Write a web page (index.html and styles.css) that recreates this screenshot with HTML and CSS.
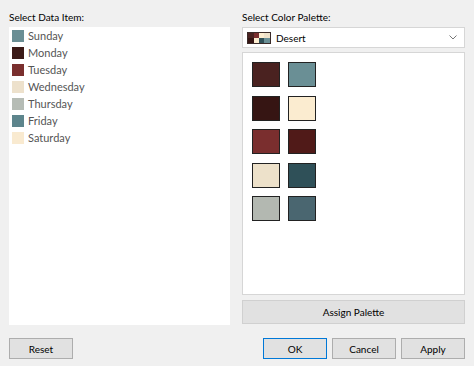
FILE: index.html
```html
<!DOCTYPE html>
<html lang="en">
<head>
    <meta charset="UTF-8">
    <title>Palette</title>
    <link rel="stylesheet" href="styles.css">
</head>
<body>

<div class="dialog">
    <div class="columns">
        <div class="col">
            <div class="label">Select Data Item:</div>
            <ul class="items">
                <li><span class="chip" style="background:#6a8e94"></span>Sunday</li>
                <li><span class="chip" style="background:#3b1a17"></span>Monday</li>
                <li><span class="chip" style="background:#7a2f2e"></span>Tuesday</li>
                <li><span class="chip" style="background:#ede1cc"></span>Wednesday</li>
                <li><span class="chip" style="background:#b6bcb5"></span>Thursday</li>
                <li><span class="chip" style="background:#5d858c"></span>Friday</li>
                <li><span class="chip" style="background:#f9ead0"></span>Saturday</li>
            </ul>
        </div>
        <div class="col">
            <div class="label">Select Color Palette:</div>
            <div class="select">
                <span class="mini">
                    <i style="background:#4a2220"></i><i style="background:#7a2e2e"></i><i style="background:#fbecd0"></i><i style="background:#ede1ca"></i>
                    <i style="background:#361513"></i><i style="background:#fbecd0"></i><i style="background:#2f5058"></i><i style="background:#6a8f95"></i>
                </span>
                <span class="select-text">Desert</span>
                <svg class="chevron" width="8" height="5" viewBox="0 0 8 5"><path d="M0.5 0.5 L4 4 L7.5 0.5" fill="none" stroke="#777" stroke-width="1"/></svg>
            </div>
            <div class="palette">
                <div class="swatches">
                    <span class="swatch" style="background:#4a2220"></span>
                    <span class="swatch" style="background:#6a8f95"></span>
                    <span class="swatch" style="background:#361513"></span>
                    <span class="swatch" style="background:#fbecd0"></span>
                    <span class="swatch" style="background:#7a2e2e"></span>
                    <span class="swatch" style="background:#501a18"></span>
                    <span class="swatch" style="background:#ede1ca"></span>
                    <span class="swatch" style="background:#2f5058"></span>
                    <span class="swatch" style="background:#b3b8b1"></span>
                    <span class="swatch" style="background:#4a6670"></span>
                </div>
            </div>
            <button class="btn wide">Assign Palette</button>
        </div>
    </div>

    <div class="footer">
        <button class="btn">Reset</button>
        <div class="actions">
            <button class="btn primary">OK</button>
            <button class="btn">Cancel</button>
            <button class="btn">Apply</button>
        </div>
    </div>
</div>

</body>
</html>
```

FILE: styles.css
```css
body {
    margin: 0;
    background-color: #f0f0f0;
    font-family: Lato, sans-serif;
    font-size: 10px;
    color: #000;
}
.dialog {
    width: 456px;
    height: 350px;
    padding: 10px 9px 8px 9px;
    display: flex;
    flex-direction: column;
    border-right: 1px solid #dcdcdc;
}
.columns {
    display: grid;
    grid-template-columns: 221px 223px;
    gap: 12px;
    height: 315px;
}
.col {
    display: flex;
    flex-direction: column;
}
.label {
    height: 17px;
    line-height: 14px;
}
.items {
    list-style: none;
    margin: 0;
    padding: 0 3px;
    background-color: #fff;
    flex: 1;
}
.items li {
    display: flex;
    align-items: center;
    height: 17px;
    color: #555;
    font-size: 11px;
}
.chip {
    width: 12px;
    height: 12px;
    margin-right: 4px;
}
.select {
    height: 19px;
    background-color: #fff;
    border: 1px solid #d6d6d6;
    display: flex;
    align-items: center;
    padding: 0 4px;
}
.mini {
    display: grid;
    grid-template-columns: 6px 5px 5px 6px;
    grid-template-rows: 5px 5px;
    border: 1px solid #3a2a28;
    margin-right: 5px;
}
.mini i {
    display: block;
}
.select-text {
    flex: 1;
}
.chevron {
    margin-right: 3px;
}
.palette {
    margin-top: 4px;
    height: 243px;
    background-color: #fff;
    border: 1px solid #d6d6d6;
    padding: 9px 0 0 9px;
    box-sizing: border-box;
}
.swatches {
    display: grid;
    grid-template-columns: 28px 28px;
    grid-auto-rows: 25px;
    column-gap: 8px;
    row-gap: 8.5px;
}
.swatch {
    border: 1px solid #222;
    box-sizing: border-box;
}
.btn {
    font-family: Lato, sans-serif;
    font-size: 10px;
    color: #000;
    background-color: #e1e1e1;
    border: 1px solid #adadad;
    width: 64px;
    height: 21px;
    padding: 0;
}
.btn.wide {
    width: 100%;
    height: 24px;
    margin-top: 5px;
    border-color: #d0d0d0;
}
.btn.primary {
    border-color: #0078d7;
}
.footer {
    margin-top: 13px;
    display: flex;
    justify-content: space-between;
}
.actions {
    display: flex;
    gap: 5px;
}
```
